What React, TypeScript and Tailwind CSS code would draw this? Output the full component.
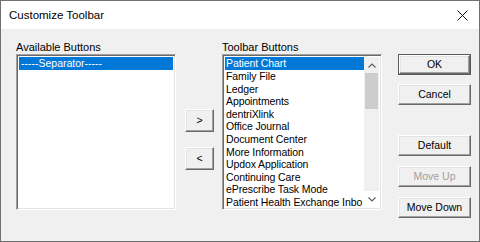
import React from "react";

const raised =
  "border border-t-white border-l-white border-b-[#696969] border-r-[#696969] shadow-[inset_-1px_-1px_0_#a0a0a0,inset_1px_1px_0_#e3e3e3] bg-[#f0f0f0]";
const sunken =
  "border border-t-[#a0a0a0] border-l-[#a0a0a0] border-b-white border-r-white shadow-[inset_1px_1px_0_#696969,inset_-1px_-1px_0_#e3e3e3] bg-white";

const toolbarItems = [
  "Patient Chart",
  "Family File",
  "Ledger",
  "Appointments",
  "dentriXlink",
  "Office Journal",
  "Document Center",
  "More Information",
  "Updox Application",
  "Continuing Care",
  "ePrescribe Task Mode",
  "Patient Health Exchange Inbo",
];

function Btn({ label, disabled, primary }: { label: string; disabled?: boolean; primary?: boolean }) {
  if (primary) {
    return (
      <div className="h-[21px] w-[73px] border border-[#5a5a5a] bg-[#f0f0f0]">
        <div className={`flex h-full w-full items-center justify-center ${raised}`}>{label}</div>
      </div>
    );
  }
  return (
    <div
      className={`flex h-[21px] w-[73px] items-center justify-center ${raised} ${
        disabled ? "text-[#a0a0a0]" : "text-black"
      }`}
    >
      {label}
    </div>
  );
}

export default function App() {
  return (
    <div
      className="flex h-[242px] w-[480px] flex-col border border-[#707070] bg-[#f0f0f0] text-[10.5px] leading-[13px] text-black"
      style={{ fontFamily: '"Liberation Sans", Arial, sans-serif' }}
    >
      {/* title bar */}
      <div className="flex h-[28px] shrink-0 items-center justify-between bg-white pl-[8px] pr-[10px]">
        <span className="text-[11.5px]">Customize Toolbar</span>
        <svg width="11" height="11" viewBox="0 0 11 11" className="mr-[1px]">
          <path d="M0.5 0.5 L10.5 10.5 M10.5 0.5 L0.5 10.5" stroke="#111" strokeWidth="1" />
        </svg>
      </div>

      <div className="flex pl-[15px] pt-[12px]">
        {/* available */}
        <div className="flex w-[160px] flex-col">
          <div className="h-[13px] text-[11px]">Available Buttons</div>
          <div className={`h-[156px] p-[2px] ${sunken}`}>
            <div className="h-[13px] bg-[#0078d7] pl-[2px] text-white">-----Separator-----</div>
          </div>
        </div>

        {/* arrows */}
        <div className="ml-[9px] flex w-[29px] flex-col pt-[68px]">
          <div className={`flex h-[23px] items-center justify-center ${raised}`}>&gt;</div>
          <div className={`mt-[15px] flex h-[23px] items-center justify-center ${raised}`}>&lt;</div>
        </div>

        {/* toolbar */}
        <div className="ml-[8px] flex w-[160px] flex-col">
          <div className="h-[13px] text-[11px]">Toolbar Buttons</div>
          <div className={`flex h-[156px] p-[2px] ${sunken}`}>
            <div className="flex-1 overflow-hidden tracking-[-0.1px]">
              {toolbarItems.map((item, i) => (
                <div
                  key={item}
                  className={`h-[12.6px] whitespace-nowrap pl-[1px] leading-[12.6px] ${
                    i === 0 ? "h-[13px] bg-[#0078d7] leading-[13px] text-white" : ""
                  }`}
                >
                  {item}
                </div>
              ))}
            </div>
            <div className="flex w-[15px] flex-col bg-[#f0f0f0]">
              <div className="flex h-[16px] items-center justify-center">
                <svg width="8" height="5" viewBox="0 0 8 5">
                  <path d="M0.5 4.5 L4 1 L7.5 4.5" stroke="#606060" strokeWidth="1.2" fill="none" />
                </svg>
              </div>
              <div className="mx-[1px] h-[36px] bg-[#cdcdcd]" />
              <div className="flex-1" />
              <div className="flex h-[16px] items-center justify-center bg-white">
                <svg width="8" height="5" viewBox="0 0 8 5">
                  <path d="M0.5 0.5 L4 4 L7.5 0.5" stroke="#606060" strokeWidth="1.2" fill="none" />
                </svg>
              </div>
            </div>
          </div>
        </div>

        {/* buttons */}
        <div className="ml-[16px] flex flex-col pt-[13px]">
          <Btn label="OK" primary />
          <div className="mt-[9px]">
            <Btn label="Cancel" />
          </div>
          <div className="mt-[30px]">
            <Btn label="Default" />
          </div>
          <div className="mt-[10px]">
            <Btn label="Move Up" disabled />
          </div>
          <div className="mt-[10px]">
            <Btn label="Move Down" />
          </div>
        </div>
      </div>
    </div>
  );
}
